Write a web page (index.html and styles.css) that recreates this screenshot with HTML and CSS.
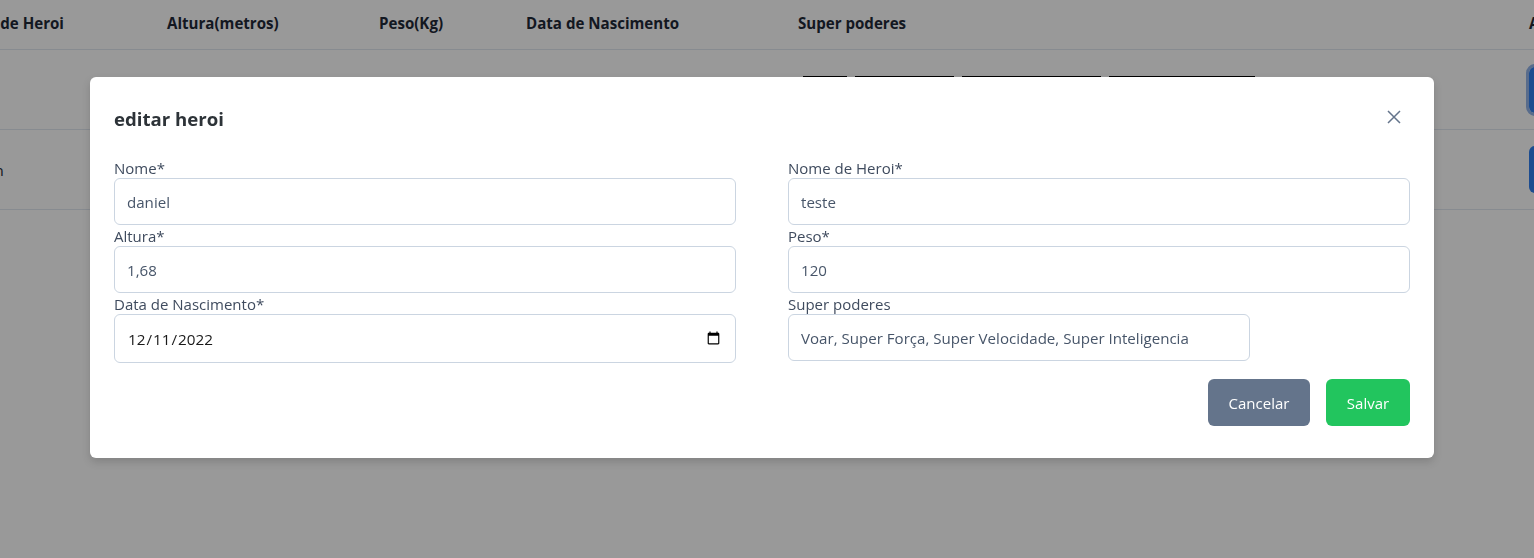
FILE: index.html
```html
<!DOCTYPE html>
<html lang="pt-BR">
<head>
<meta charset="utf-8">
<title>Herois</title>
<link rel="stylesheet" href="styles.css">
</head>
<body>
<main class="page">
  <div class="row head">
    <div class="c name">Nome de Heroi</div>
    <div class="c height">Altura(metros)</div>
    <div class="c weight">Peso(Kg)</div>
    <div class="c birth">Data de Nascimento</div>
    <div class="c powers">Super poderes</div>
    <div class="c actions">Ações</div>
  </div>
  <div class="row body">
    <div class="c name">teste</div>
    <div class="c height">1,68</div>
    <div class="c weight">120</div>
    <div class="c birth">12/11/2022</div>
    <div class="c powers tags">
      <span class="tag t1"></span><span class="tag t2"></span><span class="tag t3"></span><span class="tag t4"></span>
    </div>
    <div class="c actions"><button class="edit focus" type="button"></button></div>
  </div>
  <div class="row body">
    <div class="c name">Batman</div>
    <div class="c height"></div>
    <div class="c weight"></div>
    <div class="c birth"></div>
    <div class="c powers"></div>
    <div class="c actions"><button class="edit" type="button"></button></div>
  </div>
</main>
<div class="overlay"></div>
<section class="modal">
  <header class="modal-head">
    <h2 class="title">editar heroi</h2>
    <button class="close" type="button" aria-label="Fechar">
      <svg width="14" height="14" viewBox="0 0 14 14"><path d="M1 1L13 13M13 1L1 13" fill="none" stroke="#64748b" stroke-width="1.5"/></svg>
    </button>
  </header>
  <form class="form">
    <div class="field"><label class="label">Nome*</label><input class="input" value="daniel"></div>
    <div class="field"><label class="label">Nome de Heroi*</label><input class="input" value="teste"></div>
    <div class="field"><label class="label">Altura*</label><input class="input" value="1,68"></div>
    <div class="field"><label class="label">Peso*</label><input class="input" value="120"></div>
    <div class="field"><label class="label">Data de Nascimento*</label><input class="input date" type="date" value="2022-12-11"></div>
    <div class="field"><label class="label">Super poderes</label><div class="input multi">Voar, Super Força, Super Velocidade, Super Inteligencia</div></div>
  </form>
  <footer class="modal-foot">
    <button class="btn cancel" type="button">Cancelar</button>
    <button class="btn save" type="button">Salvar</button>
  </footer>
</section>
</body>
</html>
```
FILE: styles.css
```css
* { box-sizing: border-box; }
html, body { margin: 0; height: 100%; }
body {
  background: #fff;
  color: #1f2937;
  font-family: "Open Sans", "Liberation Sans", sans-serif;
  font-size: 15.1px;
  overflow: hidden;
}
.page { width: 1700px; margin-left: -49px; }
.row { display: flex; border-bottom: 1px solid #e2e8f0; align-items: center; }
.head { height: 50px; font-weight: 700; color: #1f2937; padding-bottom: 4px; }
.body { height: 80px; }
.body .name { letter-spacing: -.5px; }
.c { flex: none; white-space: nowrap; }
.name { width: 216px; }
.height { width: 212px; }
.weight { width: 147px; }
.birth { width: 272px; }
.powers { width: 731px; }
.tags { display: flex; gap: 8px; padding-left: 5px; padding-top: 6px; height: 40px; }
.tag { height: 24px; background: #000; display: block; }
.t1 { width: 44px; }
.t2 { width: 99px; }
.t3 { width: 139px; }
.t4 { width: 146px; }
.edit { width: 90px; height: 47px; border: 0; border-radius: 6px; background: #2f7ff0; display: block; }
.focus { outline: 3px solid #93b4ea; outline-offset: 0; height: 46px; }
.overlay { position: fixed; inset: 0; background: rgba(0, 0, 0, .4); }
.modal {
  position: absolute; left: 90px; top: 77px; width: 1344px; height: 381px;
  background: #fff; border-radius: 6px; padding: 0 24px;
  box-shadow: 0 4px 8px rgba(0, 0, 0, .15);
  color: #3f4b5e;
}
.modal-head { height: 81px; display: flex; align-items: center; justify-content: space-between; padding-top: 1px; }
.title { margin: 0; font-size: 18.6px; font-weight: 700; color: #2d3338; }
.close { border: 0; background: none; padding: 0; width: 32px; height: 32px; margin-top: -2px; display: flex; align-items: center; justify-content: center; }
.form { display: grid; grid-template-columns: 622px 622px; column-gap: 52px; row-gap: 1px; }
.field { display: flex; flex-direction: column; align-items: flex-start; }
.label { display: block; height: 20px; line-height: 20px; font-size: 15px; }
.input {
  width: 100%; height: 47px; border: 1px solid #cbd5e1; border-radius: 6px;
  padding: 0 12px; font: inherit; font-size: 15.1px; color: #475569; background: #fff;
}
.date { height: 49px; color: #1a1a1a; font-size: 15.25px; }
.multi { width: 462px; display: flex; align-items: center; white-space: nowrap; }
.modal-foot { display: flex; justify-content: flex-end; gap: 16px; margin-top: 16px; }
.btn { height: 47px; border: 0; border-radius: 6px; color: #fff; font: inherit; font-size: 15px; padding: 0; }
.cancel { width: 102px; background: #64748b; }
.save { width: 84px; background: #22c55e; }
```
